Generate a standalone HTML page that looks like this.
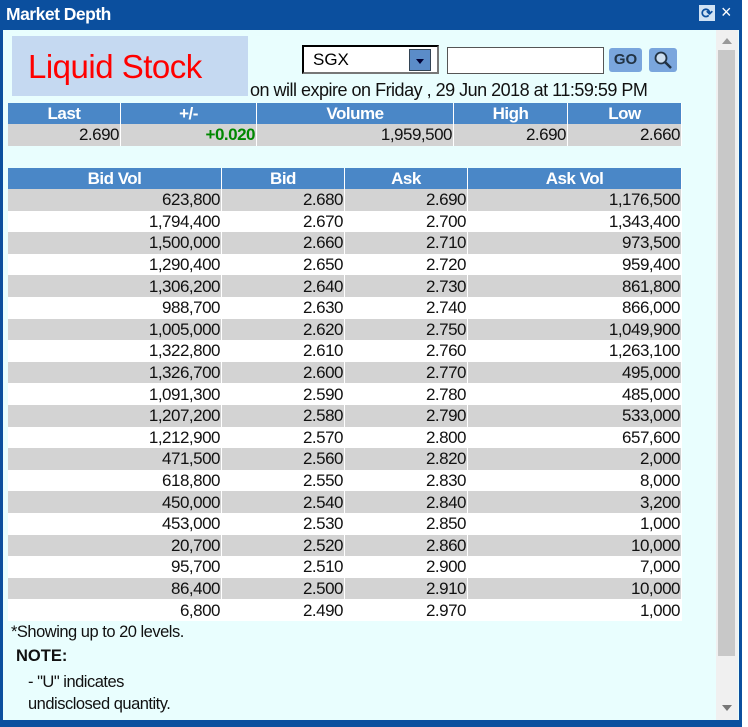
<!DOCTYPE html>
<html><head><style>
body{margin:0;width:748px;height:727px;background:#fff;position:relative;overflow:hidden;font-family:"Liberation Sans",Arial,sans-serif;}
.win{position:absolute;left:0;top:0;width:742px;height:727px;background:#0b4f9e;}
.title{position:absolute;left:6px;top:4px;color:#fff;font-weight:bold;font-size:17.5px;letter-spacing:-0.5px}
.body{position:absolute;left:3px;top:30px;width:736px;height:690px;background:#e9fefe;}
.sb{position:absolute;left:716px;top:30px;width:22px;height:690px;background:#f0f0f0}
.thumb{position:absolute;left:718px;top:50px;width:17px;height:606px;background:#c8c8c8}
table{position:absolute;border-collapse:collapse;font-size:17px;color:#111;left:8px}
td{padding:0 1px;height:21.6px;text-align:right;border-right:1px solid #fff;line-height:21px;letter-spacing:-0.5px}
th{background:#4a87c7;color:#fff;font-weight:bold;height:21px;border-right:1px solid #fff;padding:0;font-size:17px;letter-spacing:-0.5px}
tr.g td{background:#d3d3d3}
tr.w td{background:#fff}
</style></head><body>
<div class="win">
<div class="title">Market Depth</div>
<div style="position:absolute;left:699px;top:5px;width:16px;height:16px;background:#d0e2f4;color:#0b4f9e;font-size:14px;font-weight:bold;line-height:16px;text-align:center">⟳</div>
<div style="position:absolute;left:721px;top:2px;color:#fff;font-size:18px">×</div>
<div class="body"></div>
<div class="sb"></div><div class="thumb"></div>
<div style="position:absolute;left:722px;top:38px;width:0;height:0;border:5px solid transparent;border-bottom:6px solid #999;border-top:0"></div>
<div style="position:absolute;left:722px;top:705px;width:0;height:0;border:5px solid transparent;border-top:6px solid #777;border-bottom:0"></div>
<div style="position:absolute;left:12px;top:36px;width:236px;height:60px;background:#c5d9f1;color:#f00;font-family:'Liberation Sans',sans-serif;font-size:33px;line-height:62px;padding-left:16px;box-sizing:border-box;letter-spacing:-0.5px">Liquid Stock</div>
<div style="position:absolute;left:302px;top:45px;width:137px;height:29px;border:2px solid #000;border-right-color:#777;border-bottom-color:#777;background:#fff;box-sizing:border-box;font-size:17px;line-height:26px;padding-left:9px">SGX</div>
<div style="position:absolute;left:409px;top:49px;width:22px;height:22px;background:#5b8cc8;border:1px solid #345;box-sizing:border-box"><div style="position:absolute;left:6px;top:9px;border:4px solid transparent;border-top:5px solid #003;border-bottom:0"></div></div>
<div style="position:absolute;left:447px;top:47px;width:157px;height:27px;border:1px solid #555;background:#fff;box-sizing:border-box"></div>
<div style="position:absolute;left:609px;top:48px;width:33px;height:24px;background:#7aa6dd;border-radius:3px;color:#234;font-weight:bold;font-size:15px;line-height:24px;text-align:center">GO</div>
<div style="position:absolute;left:649px;top:48px;width:28px;height:24px;background:#7aa6dd;border-radius:3px"><svg width="28" height="24"><circle cx="12" cy="10" r="5.5" fill="#cde" stroke="#234" stroke-width="1.8"/><path d="M16 14 L22 20" stroke="#234" stroke-width="2.5"/></svg></div>
<div style="position:absolute;left:250px;top:80px;font-size:18px;color:#111;letter-spacing:-0.5px">on will expire on Friday , 29 Jun 2018 at 11:59:59 PM</div>
<table style="top:103px">
<tr><th style="width:112px">Last</th><th style="width:135px">+/-</th><th style="width:196px">Volume</th><th style="width:113px">High</th><th style="width:113px">Low</th></tr>
<tr class="g"><td>2.690</td><td style="color:#080;font-weight:bold">+0.020</td><td>1,959,500</td><td>2.690</td><td>2.660</td></tr>
</table>
<table style="top:168px">
<tr><th style="width:213px">Bid Vol</th><th style="width:122px">Bid</th><th style="width:122px">Ask</th><th style="width:213px">Ask Vol</th></tr>
<tr class="g"><td>623,800</td><td>2.680</td><td>2.690</td><td>1,176,500</td></tr>
<tr class="w"><td>1,794,400</td><td>2.670</td><td>2.700</td><td>1,343,400</td></tr>
<tr class="g"><td>1,500,000</td><td>2.660</td><td>2.710</td><td>973,500</td></tr>
<tr class="w"><td>1,290,400</td><td>2.650</td><td>2.720</td><td>959,400</td></tr>
<tr class="g"><td>1,306,200</td><td>2.640</td><td>2.730</td><td>861,800</td></tr>
<tr class="w"><td>988,700</td><td>2.630</td><td>2.740</td><td>866,000</td></tr>
<tr class="g"><td>1,005,000</td><td>2.620</td><td>2.750</td><td>1,049,900</td></tr>
<tr class="w"><td>1,322,800</td><td>2.610</td><td>2.760</td><td>1,263,100</td></tr>
<tr class="g"><td>1,326,700</td><td>2.600</td><td>2.770</td><td>495,000</td></tr>
<tr class="w"><td>1,091,300</td><td>2.590</td><td>2.780</td><td>485,000</td></tr>
<tr class="g"><td>1,207,200</td><td>2.580</td><td>2.790</td><td>533,000</td></tr>
<tr class="w"><td>1,212,900</td><td>2.570</td><td>2.800</td><td>657,600</td></tr>
<tr class="g"><td>471,500</td><td>2.560</td><td>2.820</td><td>2,000</td></tr>
<tr class="w"><td>618,800</td><td>2.550</td><td>2.830</td><td>8,000</td></tr>
<tr class="g"><td>450,000</td><td>2.540</td><td>2.840</td><td>3,200</td></tr>
<tr class="w"><td>453,000</td><td>2.530</td><td>2.850</td><td>1,000</td></tr>
<tr class="g"><td>20,700</td><td>2.520</td><td>2.860</td><td>10,000</td></tr>
<tr class="w"><td>95,700</td><td>2.510</td><td>2.900</td><td>7,000</td></tr>
<tr class="g"><td>86,400</td><td>2.500</td><td>2.910</td><td>10,000</td></tr>
<tr class="w"><td>6,800</td><td>2.490</td><td>2.970</td><td>1,000</td></tr>
</table>
<div style="position:absolute;left:11px;top:623px;font-size:16.5px;color:#111;letter-spacing:-0.5px">*Showing up to 20 levels.</div>
<div style="position:absolute;left:16px;top:647px;font-size:16.5px;font-weight:bold;color:#111">NOTE:</div>
<div style="position:absolute;left:28px;top:671px;font-size:16.5px;color:#111;line-height:22px;letter-spacing:-0.5px">- "U" indicates<br>undisclosed quantity.</div>
</div>
</body></html>
